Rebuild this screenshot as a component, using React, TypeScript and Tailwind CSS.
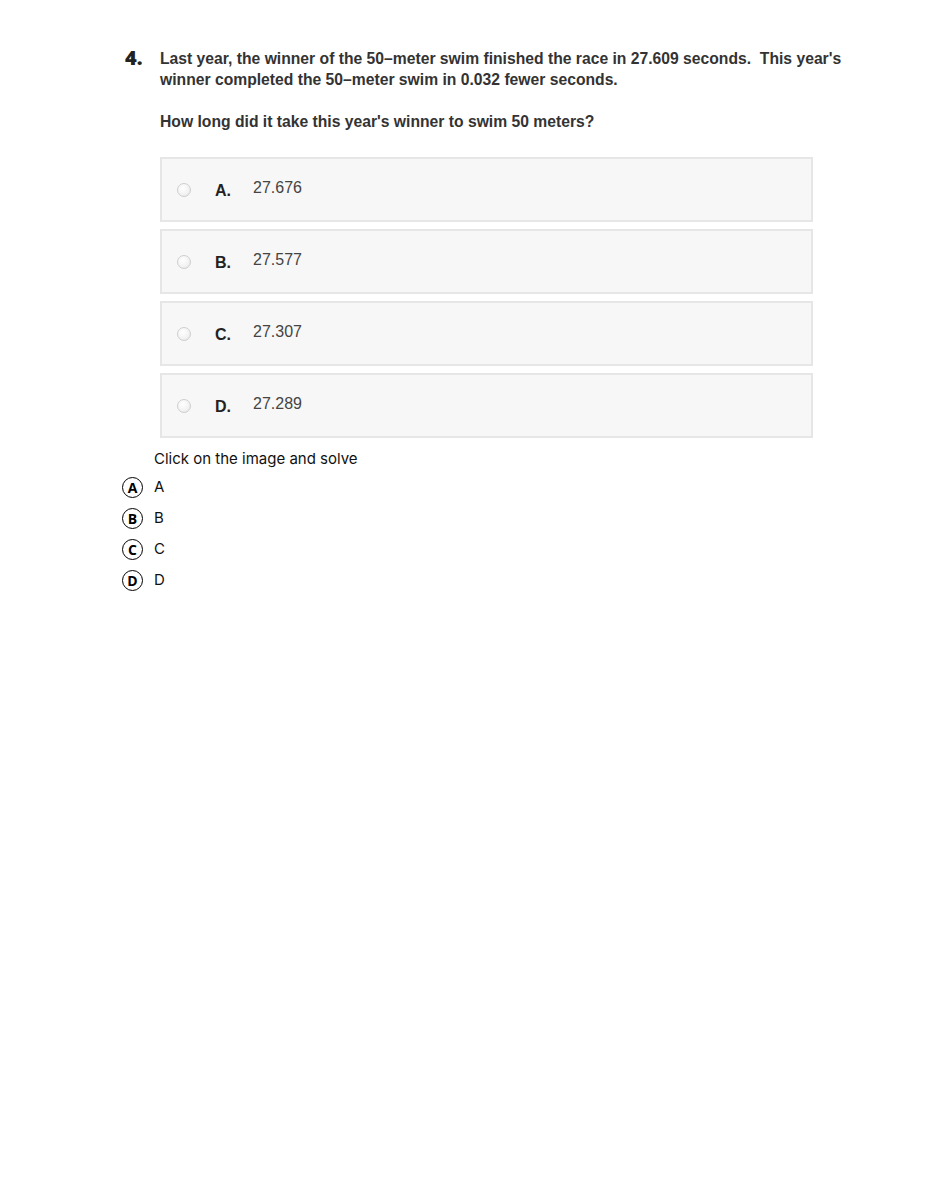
import React from "react";

const choices = [
  { l: "A.", v: "27.676" },
  { l: "B.", v: "27.577" },
  { l: "C.", v: "27.307" },
  { l: "D.", v: "27.289" },
];

function Radio() {
  return (
    <span className="inline-block w-[14px] h-[14px] rounded-full border border-[#cfcfcf] bg-[radial-gradient(circle_at_40%_35%,#ffffff_0%,#f2f2f2_60%,#dcdcdc_100%)]" />
  );
}

function CircleLetter({ c }: { c: string }) {
  return (
    <span className="flex items-center justify-center w-[21px] h-[21px] rounded-full border-[1.6px] border-black text-[14px] font-bold leading-none text-black [font-family:'Open_Sans',sans-serif]">
      {c}
    </span>
  );
}

export default function App() {
  return (
    <div className="min-h-[1200px] bg-white [font-family:'Liberation_Sans',Arial,sans-serif]">
      <div className="pl-[125px] pt-[48px]">
        <div className="flex">
          <div className="w-[35px] text-[20px] font-extrabold text-[#222] leading-none pt-[0px] [font-family:'Open_Sans',sans-serif]">4.</div>
          <div className="w-[690px]">
            <p className="text-[15.7px] font-bold leading-[21px] text-[#333]">
              Last year, the winner of the 50–meter swim finished the race in 27.609 seconds.&nbsp; This year's winner completed the 50–meter swim in 0.032 fewer seconds.
            </p>
            <p className="mt-[21px] text-[15.7px] font-bold leading-[21px] text-[#333]">
              How long did it take this year's winner to swim 50 meters?
            </p>
            <div className="mt-[25px] w-[653px] flex flex-col gap-[7px]">
              {choices.map((ch) => (
                <div key={ch.l} className="h-[65px] bg-[#f7f7f7] border-2 border-[#e6e6e6] flex items-center pl-[15px]">
                  <Radio />
                  <span className="ml-[24px] w-[38px] text-[16px] font-bold text-[#222] pt-[3px]">{ch.l}</span>
                  <span className="text-[16px] text-[#444] -mt-[3px]">{ch.v}</span>
                </div>
              ))}
            </div>
          </div>
        </div>
      </div>
      <div className="pl-[122px] pt-[9px] [font-family:Inter,sans-serif] text-[15px] text-[#111]">
        <div className="pl-[32px] leading-[24px]">Click on the image and solve</div>
        <div className="mt-[6px] flex flex-col gap-[10px]">
          {["A", "B", "C", "D"].map((c) => (
            <div key={c} className="flex items-center h-[21px]">
              <CircleLetter c={c} />
              <span className="ml-[11px]">{c}</span>
            </div>
          ))}
        </div>
      </div>
    </div>
  );
}
